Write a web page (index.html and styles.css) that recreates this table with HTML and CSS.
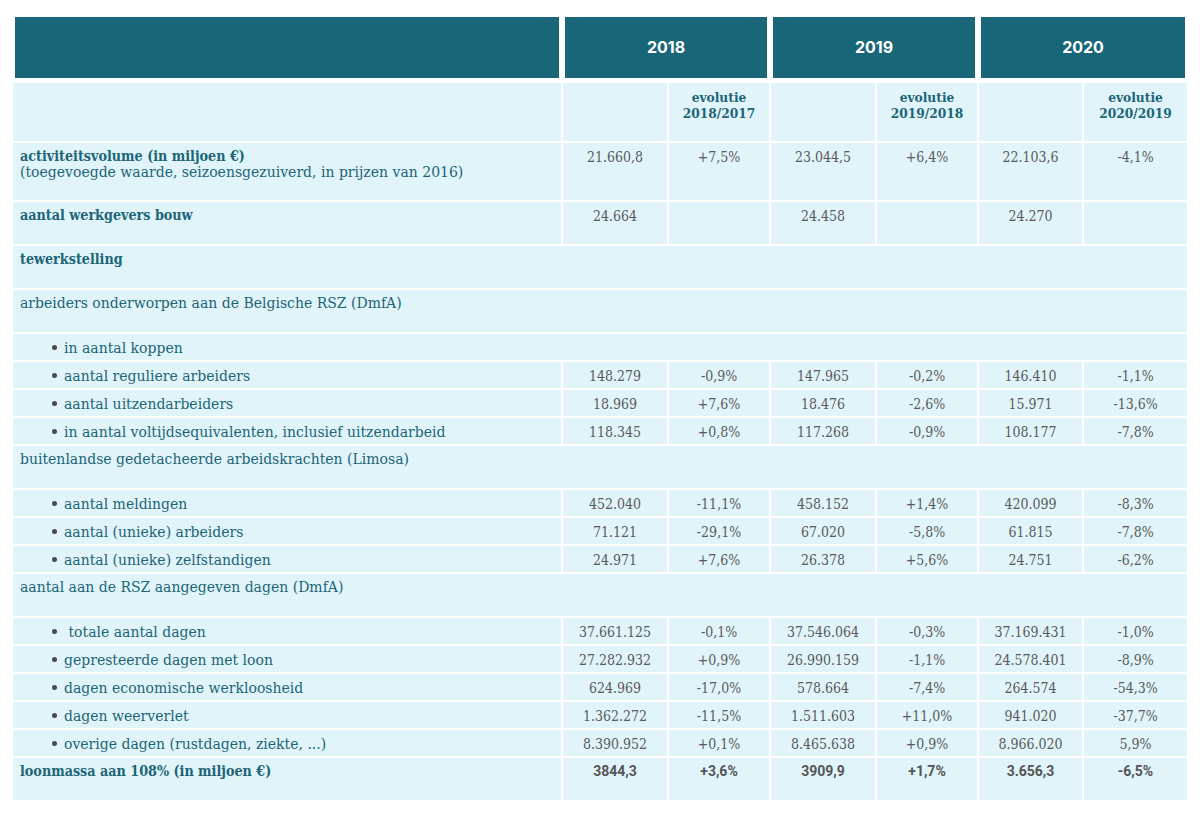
FILE: index.html
```html
<!DOCTYPE html>
<html lang="nl">
<head>
<meta charset="utf-8">
<title>Kerncijfers bouw</title>
<link rel="stylesheet" href="styles.css">
</head>
<body>
<table class="stats">
  <colgroup>
    <col class="c-label">
    <col class="c-a"><col class="c-b">
    <col class="c-a"><col class="c-b">
    <col class="c-c"><col class="c-c">
  </colgroup>
  <thead>
    <tr class="years">
      <th></th>
      <th colspan="2">2018</th>
      <th colspan="2">2019</th>
      <th colspan="2">2020</th>
    </tr>
  </thead>
  <tbody>
    <tr class="h60">
      <td></td>
      <td></td><td class="evo-h">evolutie<br>2018/2017</td>
      <td></td><td class="evo-h">evolutie<br>2019/2018</td>
      <td></td><td class="evo-h">evolutie<br>2020/2019</td>
    </tr>
    <tr class="h59">
      <td class="label"><strong>activiteitsvolume (in miljoen €)</strong><br>(toegevoegde waarde, seizoensgezuiverd, in prijzen van 2016)</td>
      <td class="num">21.660,8</td><td class="num">+7,5%</td>
      <td class="num">23.044,5</td><td class="num">+6,4%</td>
      <td class="num">22.103,6</td><td class="num">-4,1%</td>
    </tr>
    <tr class="h44">
      <td class="label"><strong>aantal werkgevers bouw</strong></td>
      <td class="num">24.664</td><td class="num"></td>
      <td class="num">24.458</td><td class="num"></td>
      <td class="num">24.270</td><td class="num"></td>
    </tr>
    <tr class="h44">
      <td class="label" colspan="7"><strong>tewerkstelling</strong></td>
    </tr>
    <tr class="h44">
      <td class="label" colspan="7">arbeiders onderworpen aan de Belgische RSZ (DmfA)</td>
    </tr>
    <tr class="h28">
      <td class="label item" colspan="7">in aantal koppen</td>
    </tr>
    <tr class="h28">
      <td class="label item">aantal reguliere arbeiders</td>
      <td class="num">148.279</td><td class="num">-0,9%</td>
      <td class="num">147.965</td><td class="num">-0,2%</td>
      <td class="num">146.410</td><td class="num">-1,1%</td>
    </tr>
    <tr class="h28">
      <td class="label item">aantal uitzendarbeiders</td>
      <td class="num">18.969</td><td class="num">+7,6%</td>
      <td class="num">18.476</td><td class="num">-2,6%</td>
      <td class="num">15.971</td><td class="num">-13,6%</td>
    </tr>
    <tr class="h28">
      <td class="label item">in aantal voltijdsequivalenten, inclusief uitzendarbeid</td>
      <td class="num">118.345</td><td class="num">+0,8%</td>
      <td class="num">117.268</td><td class="num">-0,9%</td>
      <td class="num">108.177</td><td class="num">-7,8%</td>
    </tr>
    <tr class="h44">
      <td class="label" colspan="7">buitenlandse gedetacheerde arbeidskrachten (Limosa)</td>
    </tr>
    <tr class="h28">
      <td class="label item">aantal meldingen</td>
      <td class="num">452.040</td><td class="num">-11,1%</td>
      <td class="num">458.152</td><td class="num">+1,4%</td>
      <td class="num">420.099</td><td class="num">-8,3%</td>
    </tr>
    <tr class="h28">
      <td class="label item">aantal (unieke) arbeiders</td>
      <td class="num">71.121</td><td class="num">-29,1%</td>
      <td class="num">67.020</td><td class="num">-5,8%</td>
      <td class="num">61.815</td><td class="num">-7,8%</td>
    </tr>
    <tr class="h28">
      <td class="label item">aantal (unieke) zelfstandigen</td>
      <td class="num">24.971</td><td class="num">+7,6%</td>
      <td class="num">26.378</td><td class="num">+5,6%</td>
      <td class="num">24.751</td><td class="num">-6,2%</td>
    </tr>
    <tr class="h44">
      <td class="label" colspan="7">aantal aan de RSZ aangegeven dagen (DmfA)</td>
    </tr>
    <tr class="h28">
      <td class="label item">&nbsp;totale aantal dagen</td>
      <td class="num">37.661.125</td><td class="num">-0,1%</td>
      <td class="num">37.546.064</td><td class="num">-0,3%</td>
      <td class="num">37.169.431</td><td class="num">-1,0%</td>
    </tr>
    <tr class="h28">
      <td class="label item">gepresteerde dagen met loon</td>
      <td class="num">27.282.932</td><td class="num">+0,9%</td>
      <td class="num">26.990.159</td><td class="num">-1,1%</td>
      <td class="num">24.578.401</td><td class="num">-8,9%</td>
    </tr>
    <tr class="h28">
      <td class="label item">dagen economische werkloosheid</td>
      <td class="num">624.969</td><td class="num">-17,0%</td>
      <td class="num">578.664</td><td class="num">-7,4%</td>
      <td class="num">264.574</td><td class="num">-54,3%</td>
    </tr>
    <tr class="h28">
      <td class="label item">dagen weerverlet</td>
      <td class="num">1.362.272</td><td class="num">-11,5%</td>
      <td class="num">1.511.603</td><td class="num">+11,0%</td>
      <td class="num">941.020</td><td class="num">-37,7%</td>
    </tr>
    <tr class="h28">
      <td class="label item">overige dagen (rustdagen, ziekte, ...)</td>
      <td class="num">8.390.952</td><td class="num">+0,1%</td>
      <td class="num">8.465.638</td><td class="num">+0,9%</td>
      <td class="num">8.966.020</td><td class="num">5,9%</td>
    </tr>
    <tr class="h44">
      <td class="label"><strong>loonmassa aan 108% (in miljoen €)</strong></td>
      <td class="num total">3844,3</td><td class="num total">+3,6%</td>
      <td class="num total">3909,9</td><td class="num total">+1,7%</td>
      <td class="num total">3.656,3</td><td class="num total">-6,5%</td>
    </tr>
  </tbody>
</table>
</body>
</html>
```

FILE: styles.css
```css
html, body {
  margin: 0;
  padding: 0;
  background: #ffffff;
}

body {
  padding: 14px 12px;
  font-family: "DejaVu Serif", "Liberation Serif", serif;
  font-stretch: condensed;
}

.stats {
  width: 1176px;
  table-layout: fixed;
  border-collapse: separate;
  border-spacing: 0;
}

.c-label { width: 550px; }
.c-a { width: 106px; }
.c-b { width: 102px; }
.c-c { width: 105px; }

.years th {
  box-sizing: border-box;
  height: 68px;
  padding: 0 0 1px;
  background: #1a6679;
  border: 3px solid #ffffff;
  border-bottom-width: 4px;
  color: #ffffff;
  font-family: "Inter", "Noto Sans", sans-serif;
  font-stretch: normal;
  font-weight: 700;
  font-size: 16px;
  text-align: center;
  vertical-align: middle;
}

.stats td {
  box-sizing: border-box;
  padding: 5px 4px 0;
  background: #e0f4f9;
  border: 1px solid #ffffff;
  vertical-align: top;
  font-size: 14px;
  line-height: 16px;
  color: #1d6577;
}

.h60 td { height: 60px; }
.h59 td { height: 59px; }
.h44 td { height: 44px; }
.h28 td { height: 28px; }

.stats td.label {
  padding-left: 7px;
  font-stretch: normal;
  font-size: 14px;
}

.stats td.item {
  padding-top: 6px;
  padding-left: 39px;
}

.item::before {
  content: "";
  display: inline-block;
  width: 5px;
  height: 5px;
  border-radius: 50%;
  background: #4a4a4a;
  margin: 0 7px 3px 0;
  vertical-align: middle;
}

.label strong {
  font-weight: 700;
  font-stretch: condensed;
  font-size: 14.2px;
}

.evo-h {
  text-align: center;
  font-weight: 700;
}

.stats td.evo-h {
  padding-top: 6px;
  font-size: 13.6px;
}

.stats td.num {
  padding-top: 6px;
  text-align: center;
  color: #5a5a5a;
}

.stats td.total {
  padding-top: 5px;
  font-family: "Roboto", "Liberation Sans", sans-serif;
  font-stretch: normal;
  font-weight: 700;
  color: #555555;
}
```
